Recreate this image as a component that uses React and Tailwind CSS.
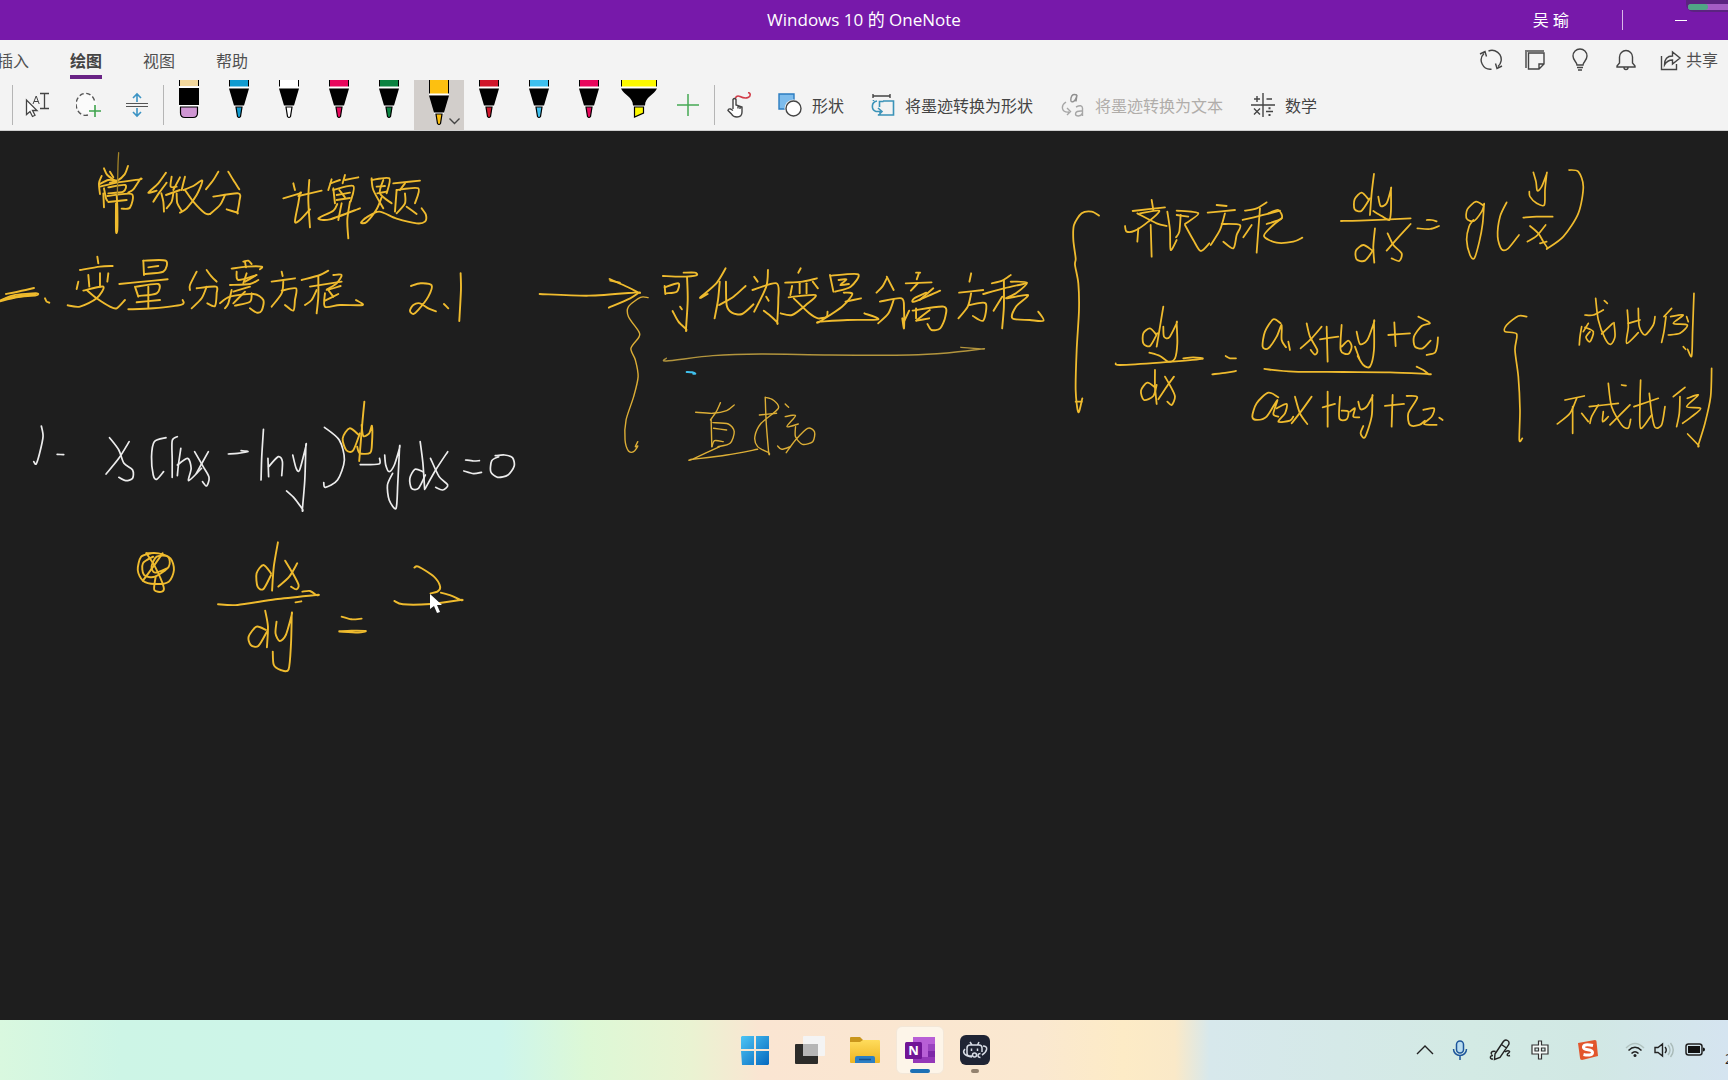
import React from 'react';

const TABS = ['插入', '绘图', '视图', '帮助'];

const PENS = [
  { name: '蓝色笔', color: '#0f9bd0' },
  { name: '白色笔', color: '#ffffff' },
  { name: '粉色笔', color: '#e8065c' },
  { name: '绿色笔', color: '#0b8341' },
  { name: '黄色笔', color: '#fdc010', active: true },
  { name: '红色笔', color: '#d0152a' },
  { name: '天蓝色笔', color: '#3dc0ef' },
  { name: '玫红色笔', color: '#e8065c' },
];

// Each layer has its own origin and unit. A stroke is a list of pen points,
// and a doubled point marks a sharp turn.
const INK = [
  {
    label: '常微分 计算题',
    x: 0, y: 9, unit: '0.3333', color: '#efbb2e', width: 1.9,
    strokes: [
      '312,85 322,105 345,122', '384,78 374,103 352,122 330,128', '330,95 340,112', '305,108 297,130 300,162',
      '300,132 325,120 352,122', '300,140 350,128 420,118 420,118 400,148 385,158', '312,145 318,175 322,182', '325,142 375,135 370,155 325,160',
      '310,160 312,202', '322,168 395,162 390,203 365,206', '325,186 380,180', '350,165 352,200 352,270 348,272 348,190',
      '498,98 475,130 445,158 470,152', '500,128 480,155 460,185', '484,160 490,185 492,215', '515,110 512,140 530,140', '540,112 520,150',
      '498,165 540,150', '520,160 515,185 500,205', '530,160 532,190 545,212', '555,110 545,150', '550,150 580,138 607,122 590,165 560,205 540,218',
      '555,150 580,185 615,220 630,222', '655,95 640,120 618,148', '685,95 700,120 718,148', '640,170 715,160 718,185 712,218 712,218 680,208',
      '675,165 660,195 630,222', '880,130 885,150', '850,175 900,160 900,160 895,190 885,245 900,240 930,208', '895,168 965,152', '928,120 925,180 930,262',
      '995,118 985,150', '992,130 1020,120', '1035,105 1028,130', '1035,120 1075,112', '1000,145 1005,190', '1000,150 1060,138 1052,185',
      '1010,165 1050,158', '1010,180 1050,174', '1012,192 1000,212 955,235 990,238 1080,205', '1025,190 1015,240', '1050,185 1042,240 1045,295', '1018,150 1035,172',
      '1115,115 1120,150 1150,205', '1115,120 1168,115 1160,160', '1130,140 1155,138', '1132,160 1160,155', '1145,172 1130,208 1100,246 1083,248 1100,232 1138,215 1190,236 1250,250 1275,245 1278,225 1265,205',
      '1180,130 1260,122', '1215,130 1200,150', '1190,150 1185,215', '1190,150 1255,145 1245,190', '1215,160 1215,190 1190,220', '1220,200 1250,222', '1150,120 1140,160 1175,190',
    ],
  },
  {
    label: '常',
    x: 0, y: 9, unit: '0.3333', color: '#a38428', width: 1.3,
    strokes: ['356,38 354,75 352,165'],
  },
  {
    label: '一、变量分离方程 2.1',
    x: 0, y: 9, unit: '0.3333', color: '#efbb2e', width: 1.9,
    strokes: [
      '18,462 50,456 102,444', '0,482 40,466 108,460 108,466 50,472 0,484', '20,474 106,462', '12,478 60,468 104,464', '135,475 140,485 148,488',
      '292,350 295,370', '240,390 300,380 338,378', '235,425 230,447', '265,405 268,440', '300,400 300,440', '325,400 322,425',
      '250,452 310,440 290,475 240,500 203,496', '260,450 290,475 330,500 350,505 375,480', '430,362 432,405', '430,362 497,362 490,395 432,402',
      '445,382 475,378', '358,432 430,425 503,418', '405,440 415,470', '408,440 475,432 470,460 415,468', '445,440 445,503', '410,487 480,480',
      '385,508 460,505 545,494 548,480', '590,395 570,435 570,450', '620,390 635,410 650,425', '590,445 648,440 650,460 645,498 622,490',
      '620,440 605,475 575,505', '730,365 745,362 755,372', '735,365 738,382', '695,386 740,380 785,380 780,388', '710,395 715,420 770,405', '690,435 750,432 775,420',
      '740,400 730,430', '765,408 735,425', '750,440 700,455', '695,450 685,490 675,505', '660,490 690,470 760,462 790,480 785,512 770,518 750,505',
      '735,455 700,490', '705,497 750,485 755,460', '845,395 848,408', '815,425 885,415', '850,425 845,460 815,500', '845,452 888,445 885,480 880,512 855,495',
      '985,392 960,405 905,420', '930,440 1025,425', '955,410 955,470 950,520', '950,450 935,480 915,495', '1000,405 1025,405 1010,430 980,450 1022,438',
      '985,450 1000,470', '1015,462 975,482', '975,460 975,500 1020,495 1088,495 1068,480', '1233,438 1262,430 1295,436 1285,470 1255,510 1240,522 1230,512 1240,495 1260,490 1285,505 1308,514',
      '1332,492 1345,505', '1382,400 1383,450 1378,543',
    ],
  },
  {
    label: '可化为变量分离方程',
    x: 520, y: 119, unit: '0.3444 0.3333', color: '#efbb2e', width: 1.9,
    strokes: [
      '57,132 200,137 340,127', '260,87 300,105 345,128 345,128 320,145 258,173', '262,92 290,98',
      '415,78 470,80 512,76 508,68 475,68', '420,108 422,132', '420,112 460,100 455,125 425,130', '485,80 487,150 482,237 482,237 460,215 443,183', '465,170 470,178',
      '597,55 570,100 523,143 545,132', '580,95 575,150 565,205', '655,108 620,140 578,165', '598,95 600,165 615,188 645,192 678,163',
      '680,80 690,95', '675,120 745,100 750,150 747,217 747,217 730,200 708,182', '720,60 715,110 680,185', '715,140 722,152',
      '815,55 808,68', '770,98 820,95 862,85', '790,108 785,135', '812,100 812,130', '832,100 832,130', '850,95 865,115', '780,142 858,135 830,165 790,195 757,190',
      '795,145 840,190 865,205 890,200 893,185', '900,75 910,125', '905,77 982,73 960,110 915,125', '925,90 948,88 930,105 955,102',
      '940,128 965,132 935,170 870,215 870,215 950,210 1040,208 1000,190', '945,155 990,145', '1065,85 1052,110 1035,128', '1065,80 1085,120',
      '1045,155 1108,145 1115,180 1115,235 1110,205', '1085,150 1070,190 1040,220', '1150,68 1162,68', '1158,70 1152,88', '1120,100 1195,97', '1155,100 1135,122',
      '1180,128 1145,145 1145,155 1220,122', '1200,115 1160,150', '1140,182 1230,170 1235,200 1220,235 1195,240 1183,222', '1150,175 1150,205', '1190,180 1150,212', '1152,212 1188,205', '1130,182 1115,215',
      '1310,70 1305,95', '1275,128 1345,120', '1310,130 1300,170 1273,205', '1305,165 1352,160 1345,212 1315,198', '1425,75 1400,92 1370,100', '1345,132 1405,115 1470,100',
      '1405,90 1405,170 1400,235', '1400,140 1375,182', '1425,95 1472,98 1440,130 1412,145 1475,135 1440,170 1430,205 1480,210 1520,212 1505,185',
    ],
  },
  {
    label: '直接',
    x: 520, y: 119, unit: '0.3444 0.3333', color: '#dcae36', width: 1.4,
    strokes: [
      '372,143 350,142 315,170 315,200 345,245 345,262 322,295 335,330 343,380 330,440 308,510 305,570 315,603 330,605 342,588 335,590 342,575',
      '510,487 560,490 600,482 622,465', '582,458 570,485 553,510', '555,510 557,590', '560,518 605,522 622,545 610,580 575,590', '562,535 600,540', '557,590 565,572 590,575',
      '580,590 500,628 500,628 600,615 690,598', '695,495 745,490', '712,442 715,520 722,608 722,608 690,590 682,560 700,520 750,475 735,450 712,442', '770,462 780,472',
      '770,500 800,497 775,530 808,522', '800,530 800,560 820,583 850,575 855,545 835,535 800,570 773,608', '748,588 760,598 785,590',
    ],
  },
  {
    label: '下划线',
    x: 520, y: 119, unit: '0.3444 0.3333', color: '#b3953d', width: 1.4,
    strokes: ['425,325 425,333 560,317 700,312 900,315 1130,315 1240,309 1340,297 1340,297 1280,292'],
  },
  {
    label: '标记',
    x: 520, y: 119, unit: '0.3444 0.3333', color: '#3fc1ee', width: 2,
    strokes: ['484,366 500,367 509,371 503,371'],
  },
  {
    label: '齐次方程，dy/dx',
    x: 1060, y: 19, unit: '0.3333', color: '#efbb2e', width: 1.8,
    strokes: [
      '117,197 95,185 65,190 42,225 40,270 47,325 45,345 55,400 57,480 50,600 47,720 55,787 67,745', '47,755 65,755',
      '275,150 280,180', '218,183 315,172', '240,190 298,182 265,215 225,242 200,245 195,228', '232,190 290,220 320,228', '235,235 232,275', '272,225 275,320',
      '322,185 330,240 332,300 350,270', '350,182 415,190 375,222', '362,195 358,245 348,262', '350,195 385,200', '375,225 400,270 422,303 448,280',
      '470,165 500,168', '443,188 525,180', '495,190 480,240 452,285', '485,222 540,225 530,255 520,295 490,275', '620,157 590,175 555,182', '548,210 610,195 660,182',
      '600,175 595,240 590,308', '575,225 550,262', '625,190 655,180 665,205 620,222', '665,205 640,225 612,258 650,278 700,275 727,263',
      '927,150 905,128 884,148 884,178 905,182 930,145', '942,72 935,130 930,195', '955,140 962,168 980,160 993,118 993,118 993,180 988,210 965,198 940,183',
      '843,213 900,212 1052,205', '935,300 910,285 888,302 890,328 915,332 940,300', '945,235 940,290 943,338', '983,250 1000,285 1025,310 1018,333 995,325', '1052,222 1015,262 980,302',
      '290,555 270,535 250,550 250,580 270,588 292,550', '310,470 300,530 290,590', '310,530 312,560 328,562 350,520 350,520 352,580 345,625 325,635 300,618 268,608',
      '167,640 180,645 300,638 425,627 400,622 370,625', '285,712 262,698 243,722 252,750 280,738 290,705', '285,660 285,710 290,762', '315,680 332,710 345,740 335,765 322,755', '342,680 320,710 295,748',
      '497,618 510,625 528,625', '457,673 500,668 528,663', '662,520 640,508 615,545 608,590 625,595 650,560 665,525 665,570 678,592', '685,575 690,600',
      '740,520 750,560 772,600 765,614 752,600', '785,530 755,565 722,595', '800,530 803,635', '780,568 835,560', '845,525 842,600 865,612 875,590 865,572 845,590', '885,590 898,625',
      '890,545 900,582 922,570 942,518 942,518 942,600 930,650 910,645 893,618', '1003,517 1007,588', '985,555 1050,550', '1075,500 1095,510 1110,520 1085,528 1062,560 1065,590 1088,595 1112,572', '1134,562 1132,585 1125,608 1100,615',
      '613,657 700,665 850,666 990,667 1105,672 1105,672 1090,660 1070,650', '655,742 625,728 590,760 577,800 592,810 620,800 652,750 640,792 655,800', '650,775 680,762 675,790 655,815 690,812 700,800',
      '705,740 720,790 742,822', '755,740 725,782 695,820', '803,725 803,830', '788,772 825,762', '840,740 838,805 860,808 865,785 845,782', '870,785 885,775 880,800 898,802',
      '895,755 902,778 920,770 937,740 937,740 935,800 915,862 902,850 910,828', '998,735 995,830', '975,768 1032,762', '1040,738 1072,742 1045,790 1050,825 1078,825 1095,812', '1090,780 1122,775 1115,800 1092,822 1130,825', '1138,803 1148,810',
    ],
  },
  {
    label: 'g(y/x)，成比例，不成比例',
    x: 1390, y: 19, unit: '0.3333', color: '#efbb2e', width: 1.7,
    strokes: [
      '110,210 125,210 140,214', '82,235 120,237 147,228', '282,168 258,155 232,178 230,206 252,213 275,185 282,165 282,165 278,220 268,275 253,325 240,315 230,270 237,230 250,210',
      '350,157 330,200 323,260 335,298 355,295 387,255', '430,67 438,95 442,122 455,110 470,72 470,72 465,120 463,165 440,160 420,140 418,125', '400,203 440,200 488,200',
      '420,228 445,250 460,275 472,293', '467,225 440,258 412,275', '450,280 470,275', '537,60 565,65 580,110 565,190 520,260 470,297',
      '410,500 385,498 350,525 345,545 380,552 375,600 385,680 390,780 388,870 397,865', '585,495 610,495 640,480', '575,530 570,560 568,585', '595,520 580,545', '585,532 610,545 600,575 588,562 600,545',
      '617,445 625,510 645,565 662,583 675,560 672,518', '643,452 652,460', '668,520 635,552', '712,480 715,530 710,580 745,548', '745,475 748,530 765,555 790,525 795,500', '715,520 750,510',
      '845,475 822,500', '828,500 822,545 815,577', '842,500 880,495 850,520 892,525 870,550 835,555', '890,500 895,515', '912,430 908,540 905,618 893,598', '880,590 887,598',
      '525,750 583,738', '560,745 540,790 502,822', '548,770 548,850', '575,790 595,815', '598,770 685,760', '625,765 605,800 600,820', '655,700 665,770 695,825 715,834 722,808', '640,785 638,815 655,800', '720,765 660,825', '695,705 708,707',
      '732,770 805,745', '752,690 750,760 752,835 785,795', '778,730 785,790 795,832 815,825 825,770', '885,712 850,740', '870,740 868,790 860,830', '892,745 925,735 890,770 932,775 905,800 878,820', '965,655 962,740 945,820 925,885 925,885 893,852',
    ],
  },
  {
    label: 'x(ln x - ln y) - y dx = 0',
    x: 0, y: 259, unit: '0.3444 0.3333', color: '#ececec', width: 1.7,
    strokes: [
      '120,108 125,140 115,190 105,222 98,215', '166,193 185,194', '318,143 345,180 360,220 385,240 385,265 365,272 345,262', '375,155 345,205 308,252',
      '482,143 448,155 440,200 445,255 455,268 475,245', '515,140 500,152 500,210 500,262', '525,175 518,225 515,257', '515,225 545,205 555,235 548,272 585,235', '565,185 590,230 607,262 600,288 588,275', '605,185 570,250',
      '663,192 690,190 720,185 700,182', '765,118 760,200 758,270', '778,205 780,260', '780,230 808,200 820,215 818,257', '850,195 860,235 870,240 888,170 888,170 885,270 878,357 878,357 855,325 832,303',
      '942,112 985,150 1000,210 980,270 945,292 940,278', '1046,224 1100,222 1102,205', '1117,195 1120,225 1130,245 1145,225 1160,175 1160,175 1155,280 1150,355 1130,330 1125,285 1140,250',
      '1228,245 1205,238 1190,265 1195,295 1215,295 1235,255', '1220,155 1228,220 1233,298', '1250,205 1275,260 1300,285 1285,300 1265,292', '1300,185 1265,240 1235,295',
      '1352,210 1375,213 1392,212', '1347,243 1375,251 1398,247', '1448,200 1428,212 1425,245 1445,262 1475,255 1493,228 1488,203 1465,195 1438,197',
    ],
  },
  {
    label: 'dx/dy =',
    x: 0, y: 259, unit: '0.3444 0.3333', color: '#efbb2e', width: 1.9,
    strokes: [
      '1042,135 1015,115 995,145 1005,180 1025,182 1045,130', '1058,35 1052,100 1043,213', '1050,105 1055,138 1072,130 1080,108 1080,160 1075,188 1045,190 1037,170',
      '440,490 410,500 400,540 415,572 450,582 490,575 505,540 495,505 460,490 425,490', '445,500 415,520 418,555 450,560 490,530 488,500 455,500 440,530 450,548 485,535', '425,490 450,530 475,590 470,605 448,600 452,560', '415,572 445,530 472,490',
      '787,550 765,525 745,550 748,590 765,597 787,555', '807,457 795,530 790,602', '828,512 850,550 867,585 860,598 845,590', '863,520 840,560 808,590',
      '633,643 690,645 800,628 918,615 918,615 900,603 878,605', '858,637 875,634', '772,720 745,710 722,740 728,765 750,768 775,725', '770,662 778,710 775,772',
      '803,695 800,730 812,753 830,735 847,675 847,675 845,760 838,838 815,840 795,825 792,785', '992,680 1020,688 1050,686', '985,724 1020,722 1062,723 1040,728 985,725',
      '1203,533 1215,530 1260,560 1278,590 1270,605 1250,610', '1145,633 1170,643 1250,642 1337,630 1337,630 1310,617 1280,608',
    ],
  },
];

function toPath(stroke) {
  const p = stroke.split(' ').map((s) => s.split(',').map(Number));
  let d = `M${p[0]}`;
  for (let i = 0; i < p.length - 1; i++) {
    const a = p[i - 1] || p[i];
    const b = p[i];
    const c = p[i + 1];
    const e = p[i + 2] || c;
    d += `C${b[0] + (c[0] - a[0]) / 7},${b[1] + (c[1] - a[1]) / 7} ${c[0] - (e[0] - b[0]) / 7},${c[1] - (e[1] - b[1]) / 7} ${c}`;
  }
  return d;
}

function InkCanvas() {
  return (
    <svg className="block size-full" role="img" aria-label="手写笔记">
      {INK.map((layer, i) => (
        <g
          key={i}
          transform={`translate(${layer.x} ${layer.y}) scale(${layer.unit})`}
          fill="none"
          stroke={layer.color}
          strokeWidth={layer.width}
          strokeLinecap="round"
          strokeLinejoin="round"
          aria-label={layer.label}
        >
          {layer.strokes.map((s) => (
            <path key={s} d={toPath(s)} vectorEffect="non-scaling-stroke" />
          ))}
        </g>
      ))}
      <path d="M430 463v15l4-3 3 7 3-1-3-7h5z" fill="#fff" />
    </svg>
  );
}

function Icon({ size = 24, children }) {
  return (
    <svg width={size} height={size} viewBox="0 0 24 24" fill="none" stroke="#444" strokeWidth="1.4" className="shrink-0" aria-hidden="true">
      {children}
    </svg>
  );
}

function Divider() {
  return <div className="h-10 w-px shrink-0 bg-[#b5b5b5]" />;
}

function Pen({ name, color, active }) {
  return (
    <button
      aria-label={name}
      aria-pressed={!!active}
      className={active ? 'h-full w-[50px] shrink-0 bg-[#d2cecb]' : 'h-full w-[50px] shrink-0'}
    >
      <svg width="50" height="50" viewBox="0 0 50 50" className="block">
        {active && <path d="M15 0h20v14H15z" fill={color} />}
        {active && <path d="M15.500 0v14M34.500 0v14" stroke="#000" />}
        <g transform={active ? 'translate(0 7)' : undefined}>
          {!active && <path d="M15 0h20v7H15z" fill={color} />}
          {!active && <path d="M15.500 0v7M34.500 0v7" stroke="#000" />}
          <path d="M15 6.500h20v2H15zM20 25h10v2H20z" fill="#fff" />
          <path d="M15 8.500h20l-5 17H20z" fill="#000" />
          <path d="M22 27h6l-1.500 9.500q-1.500 2-3 0z" fill={color} stroke="#000" strokeWidth="1.200" />
        </g>
        {active && <path d="m35.500 38.500 5 5 5-5" fill="none" stroke="#444" strokeWidth="1.400" />}
      </svg>
    </button>
  );
}

function TitleBar() {
  return (
    <header className="relative grid h-10 shrink-0 grid-cols-[1fr_auto_1fr] items-center bg-[#7719aa] text-white">
      <div />
      <h1 className="text-[17px]">Windows 10 的 OneNote</h1>
      <div className="flex items-center justify-end pr-[41px]">
        <button className="mr-[53px] text-base">吴 瑜</button>
        <div className="mr-[52px] h-5 w-px bg-[#d9b8e8]" />
        <button aria-label="最小化" className="flex h-5 w-3 items-center">
          <span className="h-px w-3 bg-white" />
        </button>
      </div>
      <div className="absolute top-0 right-0 h-3 w-[42px] rounded-bl-lg bg-[#5b2380] pt-1 pl-0.5">
        <div className="flex h-1.5 overflow-hidden rounded-l-full bg-[#a45cc4]">
          <div className="w-5 rounded-r-full bg-[#50a585]" />
        </div>
      </div>
    </header>
  );
}

function TabRow() {
  return (
    <div className="flex h-10 items-stretch justify-between overflow-hidden pr-2.5">
      <nav className="-ml-[3px] flex gap-[41px]">
        {TABS.map((tab) => (
          <button
            key={tab}
            className={
              tab === '绘图'
                ? 'h-[39px] shrink-0 border-b-4 border-[#692385] pt-1.5 font-bold text-[#444]'
                : 'h-[39px] shrink-0 border-b-4 border-transparent pt-1.5 text-[#505050]'
            }
          >
            {tab}
          </button>
        ))}
      </nav>
      <div className="flex items-center">
        <button aria-label="同步" className="mr-5">
          <Icon>
            <path d="M5 5.500A9.200 9.200 0 0 0 12.500 21.200M9.500 3A9.200 9.200 0 0 1 19 18.500M1 6l5-2.500L7.500 8.500M23 18l-5 2.500-1.500-5" />
          </Icon>
        </button>
        <button aria-label="便笺" className="mr-[21px]">
          <Icon>
            <path d="M3 20V3h18" strokeWidth="2" stroke="#777" />
            <path d="M5.500 5H21v11l-5 5H5.500zM21 16h-5v5" />
          </Icon>
        </button>
        <button aria-label="操作说明" className="mr-[22px]">
          <Icon>
            <path d="M9 17c0-3-4-4.500-4-9a7 7 0 0 1 14 0c0 4.500-4 6-4 9zM9 19.500h6M10 22h4" />
          </Icon>
        </button>
        <button aria-label="通知" className="mr-5">
          <Icon>
            <path d="M3 19v-1l2.500-3V9a6.500 6.500 0 0 1 13 0v6l2.500 3v1zM10 19.500a2 2 0 0 0 4 0" />
          </Icon>
        </button>
        <button className="flex items-center gap-1 text-[#505050]">
          <Icon>
            <path d="M3.500 8v13.500h15V16M6.500 17c0-6 3-9 8-9V4l7.500 6-7.500 6v-4c-4 0-6 1.500-8 5z" />
          </Icon>
          共享
        </button>
      </div>
    </div>
  );
}

function ToolRow() {
  return (
    <div className="flex h-[51px] items-center overflow-hidden border-b border-[#cfcfcf] text-[#444]">
      <div className="w-3 shrink-0" />
      <Divider />
      <button aria-label="选择对象或键入文本" className="ml-3 flex w-[26px] justify-center">
        <svg width="26" height="26" viewBox="0 0 26 26" fill="none" stroke="#444" strokeWidth="1.300">
          <path d="M1.500 8v14.500l3.500-3 2.500 5 2.500-1.200L7.500 18.500H12z" fill="#fff" />
          <path d="M8 12l3.200-8 3 8M9 9.500h4.200" strokeWidth="1" />
          <path d="M15 1.500h4.500v15H15M24 1.500h-4.500M19.500 16.500H24" />
        </svg>
      </button>
      <button aria-label="套索选择" className="ml-[25px]">
        <svg width="26" height="26" viewBox="0 0 26 26" fill="none" stroke="#555" strokeWidth="1.400">
          <circle cx="11" cy="12" r="10" fill="#fbfbfb" stroke="none" />
          <path d="M18.500 8.500A9.500 11 0 1 0 12 23" strokeDasharray="4.500 2.500" />
          <path d="M19 13v12M13 19h12" stroke="#3fa34d" strokeWidth="1.600" />
        </svg>
      </button>
      <button aria-label="插入空间" className="ml-[23px]">
        <svg width="24" height="26" viewBox="0 0 24 26" fill="none" stroke="#3b93c4" strokeWidth="1.600">
          <path d="M12 10V2M8 6l4-4 4 4M12 16v8M8 20l4 4 4-4" />
          <path d="M1 11.500h22M1 14.500h22" stroke="#555" strokeWidth="1.200" />
        </svg>
      </button>
      <div className="w-[14px] shrink-0" />
      <Divider />
      <div className="flex h-full shrink-0">
        <button aria-label="橡皮擦" className="h-full w-[50px]">
          <svg width="50" height="50" viewBox="0 0 50 50" className="block">
            <path d="M15 0h20v6H15z" fill="#f2d79c" />
            <path d="M15.500 0v6M34.500 0v6" stroke="#000" />
            <path d="M15 6.500h20v1.500H15zM15 25h20v2H15z" fill="#fff" />
            <path d="M15 8h20v17H15z" fill="#000" />
            <path d="M16.500 27h17v6q0 4.500-4.500 4.500h-8q-4.500 0-4.500-4.500z" fill="#cf96d3" stroke="#000" strokeWidth="1.200" />
          </svg>
        </button>
        {PENS.map((pen) => (
          <Pen key={pen.name} {...pen} />
        ))}
        <button aria-label="荧光笔" className="h-full w-[50px]">
          <svg width="50" height="50" viewBox="0 0 50 50" className="block">
            <path d="M7 0h36v7H7z" fill="#fdf900" />
            <path d="M7.500 0v7M42.500 0v7" stroke="#000" />
            <path d="M7 6.500h36v2H7z" fill="#fff" />
            <path d="M7 8.500h36C40 15 31 17 31 25.500H19C19 17 10 15 7 8.500z" fill="#000" />
            <path d="M20.500 27h9v6l-9 4z" fill="#fdf900" stroke="#000" strokeWidth="1.200" />
          </svg>
        </button>
        <button aria-label="添加笔" className="flex w-12 items-center justify-center">
          <svg width="22" height="22" viewBox="0 0 22 22" stroke="#46a954" strokeWidth="1.500">
            <path d="M11 0v22M0 11h22" />
          </svg>
        </button>
      </div>
      <div className="w-0.5 shrink-0" />
      <Divider />
      <button aria-label="用触摸绘图" className="ml-3">
        <svg width="26" height="26" viewBox="0 0 26 26" fill="none" stroke="#444" strokeWidth="1.400">
          <path d="M8 9c0-4 2-6 5-4.500s5 2.500 8 1 3-4.500 0-5" stroke="#d13c48" strokeWidth="1.600" />
          <path d="M6 17V7.500q1.500-2 3 0V13l6 2v5q0 5-5 5-4 0-5.500-3L1 18.500q.5-2 2.500-1.500L6 18.500M11 13.500v3M13 14v3" fill="#fff" />
        </svg>
      </button>
      <button className="ml-[25px] flex shrink-0 items-center gap-2.5">
        <Icon>
          <path d="M1 1h15v15H1z" fill="#7dbcec" stroke="#2b7cc0" />
          <circle cx="15.500" cy="15.500" r="9" fill="#f3f3f3" stroke="none" />
          <circle cx="15.500" cy="15.500" r="7.500" fill="#fff" />
        </Icon>
        <span className="pt-0.5">形状</span>
      </button>
      <button className="ml-[27px] flex shrink-0 items-center gap-2.5">
        <Icon>
          <path d="M2 3h17M2 1v4M19 1v4" />
          <path d="M12 8h10.500v14H9v-4M2.500 7v1M6 8C0 9 0 17 5 18.500h5M7 15l4 3.500-4 4M8.500 14V8.500h4" stroke="#3b93b8" strokeWidth="1.600" />
        </Icon>
        <span className="pt-0.5">将墨迹转换为形状</span>
      </button>
      <button disabled className="ml-7 flex shrink-0 items-center gap-2.5 text-[#b0adaa]">
        <Icon>
          <path d="M5 9c-6 4-4 11 3 10M6 15l3.500 3.500L6 22" stroke="#a6a6a6" />
          <path d="M16 2q-5-2-6 3-1 5 2.500 3.500Q15 7 16 2l-1 6.500" stroke="#8f8f8f" />
          <path d="M15 14q6-3 6.500 1v8M21.500 18q-7-.5-7 3 0 2 3 2 3-.5 4-3" stroke="#a6a6a6" />
        </Icon>
        <span className="pt-0.5">将墨迹转换为文本</span>
      </button>
      <button className="ml-7 flex shrink-0 items-center gap-2.5">
        <Icon>
          <path d="M12 0v24M0 12h24M3 6h6M6 3v6M15.500 6h5.500M3 15.500l6 6M9 15.500l-6 6M15 18.500h7" />
          <path d="M18.500 14.200v2M18.500 21v2" strokeWidth="2" />
        </Icon>
        <span className="pt-0.5">数学</span>
      </button>
    </div>
  );
}

function Taskbar() {
  return (
    <footer className="grid h-[60px] shrink-0 grid-cols-[1fr_auto_1fr] items-center bg-[linear-gradient(90deg,#d9f8df_0%,#cdf5e6_7%,#cdf5ec_29%,#ddf8d6_34%,#eaf3d2_40%,#fae5d2_44%,#fae8d0_60%,#fdebc6_65%,#fae9c8_68%,#d7e8ec_70%,#d3eae4_85%,#d1e8e4_92%,#d5e4f0_100%)]">
      <div />
      <div className="flex gap-[7px] pl-0.5">
        <button aria-label="开始" className="flex size-12 items-center justify-center">
          <svg width="30" height="30" viewBox="0 0 30 30">
            <defs>
              <linearGradient id="win" x1="0" y1="0" x2="1" y2="1">
                <stop offset="0" stopColor="#4cc5f5" />
                <stop offset="1" stopColor="#0669bf" />
              </linearGradient>
            </defs>
            <path d="M2 1h12v13H1V2zM16 1h13v13H16zM1 16h13v14H2zM16 16h13v13l-1 1H16z" fill="url(#win)" />
          </svg>
        </button>
        <button aria-label="任务视图" className="flex size-12 items-center justify-center">
          <svg width="30" height="30" viewBox="0 0 30 30">
            <rect x="0" y="9" width="23" height="20" rx="1" fill="#2c2c2a" />
            <rect x="8" y="1" width="22" height="20" rx="1" fill="#f4f4f4" />
            <path d="M8 9h15v12H8z" fill="#b6b6b6" />
          </svg>
        </button>
        <button aria-label="文件资源管理器" className="flex size-12 items-center justify-center">
          <svg width="30" height="30" viewBox="0 0 30 30">
            <defs>
              <linearGradient id="folder" x1="0" y1="0" x2="0" y2="1">
                <stop offset="0" stopColor="#ffdc5c" />
                <stop offset="1" stopColor="#edb421" />
              </linearGradient>
            </defs>
            <path d="M0 3q0-1 1-1h9l3 3v4H0z" fill="#c9961c" />
            <path d="M0 7h10l3-2h16q1 0 1 1v21q0 1-1 1H1q-1 0-1-1z" fill="url(#folder)" />
            <path d="M5 28v-5q0-2 2-2h16q2 0 2 2v5z" fill="#2b7fc4" />
            <path d="M9 24.500h12" stroke="#15518d" strokeWidth="1.500" />
          </svg>
        </button>
        <button aria-label="OneNote" className="relative flex size-12 items-center justify-center rounded-md border border-[#f3e7d8] bg-[#fdf5e9]">
          <svg width="30" height="30" viewBox="0 0 30 30">
            <path d="M8 2h22v26H8z" fill="#b85fd6" />
            <path d="M23 9h7v7h-7z" fill="#9a43bf" />
            <path d="M23 16h7v6h-7z" fill="#7e28a8" />
            <path d="M8 22h22v6H8z" fill="#9438b8" />
            <rect y="7" width="17" height="17" rx="1.500" fill="#711596" />
            <text x="8.500" y="20" textAnchor="middle" fontSize="13" fontWeight="700" fill="#fff">N</text>
          </svg>
          <span className="absolute bottom-0 h-1 w-5 rounded-full bg-[#1b70b5]" />
        </button>
        <button aria-label="直播助手" className="relative flex size-12 items-center justify-center">
          <svg width="30" height="30" viewBox="0 0 30 30" fill="none" stroke="#d7dce6" strokeWidth="1.500">
            <rect width="30" height="30" rx="6" fill="#1f2434" stroke="none" />
            <path d="M10 7l2 3M19 7l-1.500 3M12 21H9.500Q7 21 7 18v-5q0-3 3-3h9q3 0 3 3v4M11.500 13.500v2.500M17.500 13.500v2.500M5 14c-3 3-1 7 7 8M23 11c6 0 4 6-1 9" />
            <circle cx="14.500" cy="20" r="2" />
            <path d="M20.500 18.500q-2.500 0-2.500 2t2.500 2" />
          </svg>
          <span className="absolute bottom-px h-1 w-2 rounded-full bg-[#93826f]" />
        </button>
      </div>
      <div className="flex items-center justify-end overflow-hidden">
        <button aria-label="显示隐藏的图标" className="flex w-[34px] justify-center">
          <svg width="18" height="10" viewBox="0 0 18 10" fill="none" stroke="#222" strokeWidth="1.400">
            <path d="m1 9 8-8 8 8" />
          </svg>
        </button>
        <button aria-label="麦克风" className="flex w-9 justify-center">
          <svg width="16" height="20" viewBox="0 0 16 20" fill="none" stroke="#1d559b" strokeWidth="1.500">
            <rect x="4.500" y="1" width="7" height="12" rx="3.500" fill="#b9dcef" />
            <path d="M1.500 9a6.500 6.500 0 0 0 13 0M8 15.500V20" />
          </svg>
        </button>
        <button aria-label="触笔" className="flex w-11 justify-center">
          <svg width="22" height="22" viewBox="0 0 22 22" fill="none" stroke="#222" strokeWidth="1.400">
            <path d="M6 15 14 3q2-3 4.500-1.500T19.500 6L11 18.500 5.500 20.500zM12.500 5.500l5 3.500M6.500 12.500C3 11.500 1 14 3 15.500M4 16.500c-3.500 0-3.500 4 0 3.500M16 13c4-2.500 6-.5 3.500 1.200s-1 3.300 1.500 2.300" />
          </svg>
        </button>
        <button aria-label="中文输入法" className="flex w-9 justify-center">
          <svg width="18" height="20" viewBox="0 0 18 20" fill="#f4faf8" stroke="#333" strokeWidth="1.200">
            <path d="M7.500 1h3v4H17v9h-6.500v5h-3v-5H1V5h6.500z" />
            <path d="M4 8h3.500v3H4zM10.500 8H14v3h-3.500z" fill="#d3e9e5" />
          </svg>
        </button>
        <button aria-label="搜狗输入法" className="flex w-[60px] justify-center">
          <svg width="22" height="22" viewBox="0 0 22 22">
            <path d="M1 4 18 1q1.500 0 1.500 1.500L21 17l-16 4q-2 0-2-2z" fill="#e2562c" />
            <path d="M16 6.500Q6 4.500 6.500 8.500c.5 3.500 9 1 9 5 0 3-5 3-9 2" fill="none" stroke="#fff" strokeWidth="3" />
          </svg>
        </button>
        <button aria-label="网络" className="flex w-[34px] justify-center">
          <svg width="20" height="16" viewBox="0 0 20 16" fill="none" stroke="#222" strokeWidth="1.500">
            <path d="M1 6q9-9 18 0" stroke="#b3c4c1" />
            <path d="M3.500 8.500q6.500-6.500 13 0M6.500 11.500q3.500-3.500 7 0" />
            <circle cx="10" cy="13.500" r="1.500" fill="#222" stroke="none" />
          </svg>
        </button>
        <button aria-label="音量" className="flex w-6 justify-center">
          <svg width="20" height="16" viewBox="0 0 20 16" fill="none" stroke="#222" strokeWidth="1.400">
            <path d="M1 5.500v5h3L8.500 14V2L4 5.500zM11 5q2.500 3 0 6" />
            <path d="M14 3q4 5 0 10M16.500 1q5.500 7 0 14" stroke="#a9bab8" />
          </svg>
        </button>
        <button aria-label="电池" className="flex w-[38px] justify-center">
          <svg width="20" height="14" viewBox="0 0 20 14">
            <rect x="1" y="1" width="16" height="11" rx="2.500" fill="none" stroke="#222" strokeWidth="1.500" />
            <path d="M3 3h12v7H3zM18 4.500q2 0 2 2t-2 2z" fill="#111" />
          </svg>
        </button>
        <div className="w-3.5 overflow-hidden pt-[18px] pl-[11px] text-sm leading-4 whitespace-nowrap text-[#222]">2</div>
      </div>
    </footer>
  );
}

export default function App() {
  return (
    <div className="flex h-screen flex-col overflow-hidden bg-[#1e1e1e] font-['Open_Sans','Noto_Sans_CJK_SC',sans-serif] text-base">
      <TitleBar />
      <div className="shrink-0 bg-[#f3f3f3]">
        <TabRow />
        <ToolRow />
      </div>
      <main className="min-h-0 flex-1">
        <InkCanvas />
      </main>
      <Taskbar />
    </div>
  );
}
